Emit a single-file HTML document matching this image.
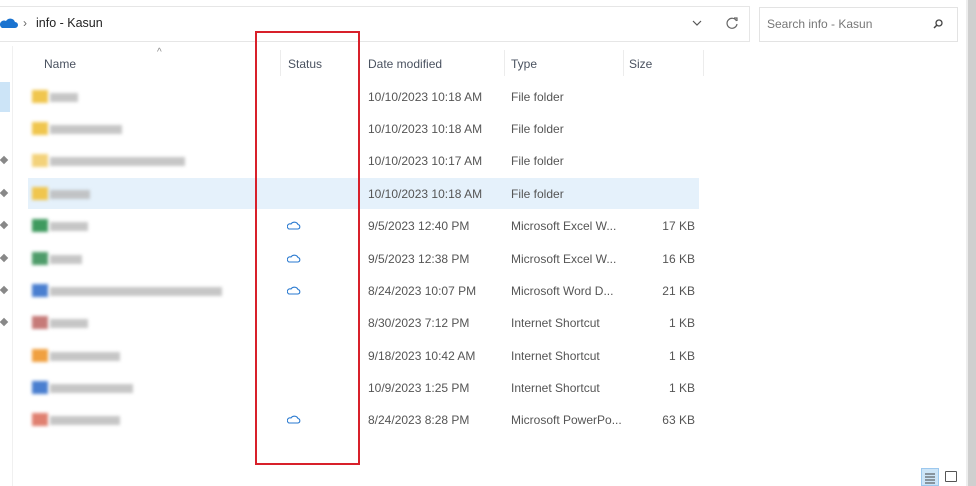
<!DOCTYPE html>
<html><head><meta charset="utf-8"><style>
body{margin:0;width:976px;height:486px;background:#fff;font-family:"Liberation Sans",sans-serif;position:relative;overflow:hidden;color:#333}
.a{position:absolute}
.t{font-size:12px;color:#555;white-space:nowrap}
.h{font-size:12px;color:#4a5260}
.bl{position:absolute;filter:blur(1.6px)}
</style></head><body>
<!-- address bar -->
<div class="a" style="left:-2px;top:6px;width:750px;height:34px;border:1px solid #e6e6e6;background:#fff"></div>
<svg class="a" style="left:0;top:17px" width="18" height="12" viewBox="0 0 18 12"><path d="M2 11 H15 A3 3 0 0 0 15 5 A5 5 0 0 0 6 4 A3.5 3.5 0 0 0 2 11Z" fill="#1a73d0"/></svg>
<div class="a t" style="left:23px;top:16px;color:#666">›</div>
<div class="a" style="left:36px;top:16px;font-size:12.5px;color:#222">info - Kasun</div>
<svg class="a" style="left:691px;top:19px" width="12" height="8"><path d="M2 2 L6 6 L10 2" stroke="#555" fill="none" stroke-width="1.2"/></svg>
<svg class="a" style="left:724px;top:15px" width="16" height="16" viewBox="0 0 16 16"><path d="M12.5 6 A5 5 0 1 0 13 9" stroke="#666" fill="none" stroke-width="1.2"/><path d="M10 3 L13 3 L13 6" stroke="#666" fill="none" stroke-width="1.2"/></svg>
<div class="a" style="left:759px;top:7px;width:197px;height:33px;border:1px solid #e3e3e3"></div>
<div class="a t" style="left:767px;top:17px;color:#777">Search info - Kasun</div>
<svg class="a" style="left:932px;top:18px" width="12" height="12"><circle cx="7" cy="5" r="3" stroke="#444" fill="none" stroke-width="1.3"/><path d="M5 7 L2 10" stroke="#444" stroke-width="1.5"/></svg>
<!-- scrollbar -->
<div class="a" style="left:968px;top:0;width:8px;height:486px;background:#cfcfcf"></div>
<div class="a" style="left:966px;top:0;width:2px;height:486px;background:#ededed"></div>
<!-- nav pane -->
<div class="a" style="left:0;top:82px;width:10px;height:30px;background:#cce4f7"></div>
<div class="a" style="left:12px;top:46px;width:1px;height:440px;background:#f0f0f0"></div>
<!-- headers -->
<div class="a" style="left:157px;top:47px;font-size:10px;color:#888">^</div>
<div class="a h" style="left:44px;top:57px">Name</div>
<div class="a" style="left:280px;top:50px;width:1px;height:26px;background:#ececec"></div>
<div class="a h" style="left:288px;top:57px">Status</div>
<div class="a h" style="left:368px;top:57px">Date modified</div>
<div class="a" style="left:504px;top:50px;width:1px;height:26px;background:#ececec"></div>
<div class="a h" style="left:511px;top:57px">Type</div>
<div class="a" style="left:623px;top:50px;width:1px;height:26px;background:#ececec"></div>
<div class="a h" style="left:629px;top:57px">Size</div>
<div class="a" style="left:703px;top:50px;width:1px;height:26px;background:#ececec"></div>
<!-- selected row -->
<div class="a" style="left:28px;top:178px;width:671px;height:31px;background:#e5f1fb"></div>
<div id="rows"></div>
<!-- red box -->
<div class="a" style="left:255px;top:31px;width:101px;height:430px;border:2px solid #d8202a"></div>
<!-- view icons -->
<div class="a" style="left:921px;top:468px;width:18px;height:18px;background:#cce4f7;border:1px solid #9cc8ee;box-sizing:border-box"></div>
<svg class="a" style="left:924px;top:472px" width="12" height="12"><path d="M1 2H11M1 5H11M1 8H11M1 11H11" stroke="#444"/></svg>
<div class="a" style="left:945px;top:471px;width:10px;height:9px;border:1.5px solid #555;border-radius:1px"></div>
<script>
var R=[
[97,"10/10/2023 10:18 AM","File folder","",0,78,"#f0c64e"],
[129,"10/10/2023 10:18 AM","File folder","",0,122,"#f0c64e"],
[161,"10/10/2023 10:17 AM","File folder","",0,185,"#f3d27a"],
[194,"10/10/2023 10:18 AM","File folder","",0,90,"#f0c64e"],
[226,"9/5/2023 12:40 PM","Microsoft Excel W...","17 KB",1,88,"#3f9a5e"],
[259,"9/5/2023 12:38 PM","Microsoft Excel W...","16 KB",1,82,"#4f9c6a"],
[291,"8/24/2023 10:07 PM","Microsoft Word D...","21 KB",1,222,"#4a7fd0"],
[323,"8/30/2023 7:12 PM","Internet Shortcut","1 KB",0,88,"#c67a78"],
[356,"9/18/2023 10:42 AM","Internet Shortcut","1 KB",0,120,"#f0a040"],
[388,"10/9/2023 1:25 PM","Internet Shortcut","1 KB",0,133,"#4a7fd0"],
[420,"8/24/2023 8:28 PM","Microsoft PowerPo...","63 KB",1,120,"#e08070"]];
var h="";
R.forEach(function(r,i){var y=r[0];
h+='<div class="bl" style="left:32px;top:'+(y-7)+'px;width:16px;height:13px;background:'+r[6]+'"></div>';
h+='<div class="bl" style="left:50px;top:'+(y-4)+'px;width:'+(r[5]-50)+'px;height:9px;background:#b8b8b8;opacity:.8"></div>';
if(i>=2&&i<=7)h+='<div class="a" style="left:1px;top:'+(y-4)+'px;width:6px;height:6px;background:#888;transform:rotate(45deg)"></div>';
h+='<div class="a t" style="left:368px;top:'+(y-7)+'px">'+r[1]+'</div>';
h+='<div class="a t" style="left:511px;top:'+(y-7)+'px">'+r[2]+'</div>';
h+='<div class="a t" style="right:281px;top:'+(y-7)+'px">'+r[3]+'</div>';
if(r[4])h+='<svg class="a" style="left:287px;top:'+(y-6)+'px" width="14" height="10" viewBox="0 0 14 10"><path d="M2 9H11A2.3 2.3 0 0 0 11 4.5A4 4 0 0 0 4 4A2.5 2.5 0 0 0 2 9Z" fill="none" stroke="#2a7ad0" stroke-width="1.1"/></svg>';
});
document.getElementById("rows").innerHTML=h;
</script>
</body></html>
